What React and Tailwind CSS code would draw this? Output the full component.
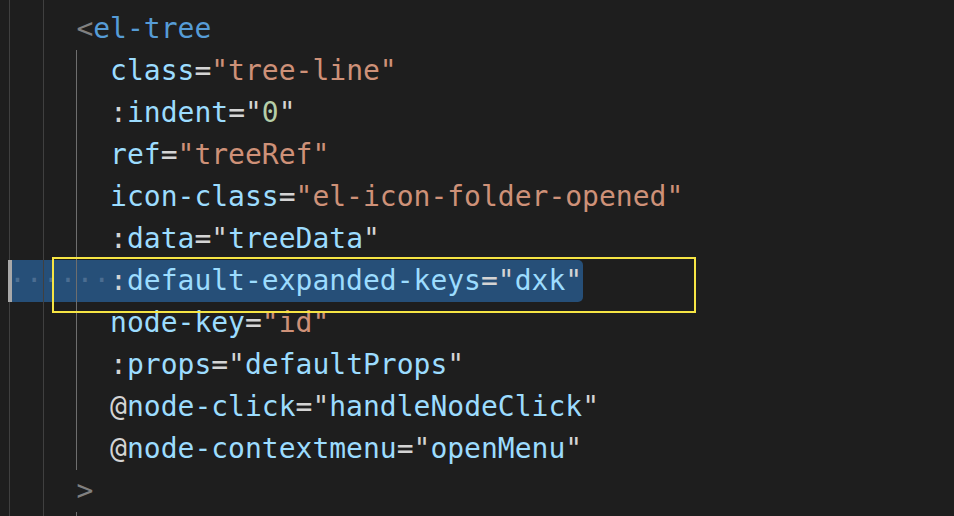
import React from 'react'

// VS Code dark+ token colours
const C = {
  tag: 'text-[#808080]',
  name: 'text-[#569cd6]',
  attr: 'text-[#9cdcfe]',
  punct: 'text-[#d4d4d4]',
  str: 'text-[#ce9178]',
  num: 'text-[#b5cea8]',
}

// each line: indent units (2 spaces each) + token list [class, text]
const LINES = [
  { units: 2, tokens: [[C.tag, '<'], [C.name, 'el-tree']] },
  { units: 3, tokens: [[C.attr, 'class'], [C.punct, '='], [C.str, '"tree-line"']] },
  { units: 3, tokens: [[C.punct, ':'], [C.attr, 'indent'], [C.punct, '="'], [C.num, '0'], [C.punct, '"']] },
  { units: 3, tokens: [[C.attr, 'ref'], [C.punct, '='], [C.str, '"treeRef"']] },
  { units: 3, tokens: [[C.attr, 'icon-class'], [C.punct, '='], [C.str, '"el-icon-folder-opened"']] },
  { units: 3, tokens: [[C.punct, ':'], [C.attr, 'data'], [C.punct, '="'], [C.attr, 'treeData'], [C.punct, '"']] },
  { units: 3, selected: true, tokens: [[C.punct, ':'], [C.attr, 'default-expanded-keys'], [C.punct, '="'], [C.attr, 'dxk'], [C.punct, '"']] },
  { units: 3, tokens: [[C.attr, 'node-key'], [C.punct, '='], [C.str, '"id"']] },
  { units: 3, tokens: [[C.punct, ':'], [C.attr, 'props'], [C.punct, '="'], [C.attr, 'defaultProps'], [C.punct, '"']] },
  { units: 3, tokens: [[C.punct, '@'], [C.attr, 'node-click'], [C.punct, '="'], [C.attr, 'handleNodeClick'], [C.punct, '"']] },
  { units: 3, tokens: [[C.punct, '@'], [C.attr, 'node-contextmenu'], [C.punct, '="'], [C.attr, 'openMenu'], [C.punct, '"']] },
  { units: 2, tokens: [[C.tag, '>']] },
]

function Guide({ level, dots }) {
  return (
    <span
      className={[
        'w-[2ch] shrink-0 border-l',
        level === 2 ? 'border-[#6e6e6e]' : 'border-[#404040]',
        dots ? 'text-[#4b6d91] tracking-normal' : '',
      ].join(' ')}
    >
      {dots ? <span className="relative -left-px">··</span> : null}
    </span>
  )
}

function Guides({ count, dots }) {
  return Array.from({ length: count }, (_, i) => <Guide key={i} level={i} dots={dots} />)
}

function CodeLine({ line }) {
  const body = (
    <>
      <Guides count={line.units} dots={line.selected} />
      {line.tokens.map(([cls, text], i) => (
        <span key={i} className={cls}>{text}</span>
      ))}
    </>
  )

  if (line.selected) {
    return (
      <div className="flex h-[42px] leading-[42px]">
        <div className="relative flex bg-[#264f78] rounded-r-[5px] pr-px">
          <span className="absolute -left-px top-0 h-full w-1 bg-[#a9a9a9]" />
          {body}
        </div>
      </div>
    )
  }

  return <div className="flex h-[42px] leading-[42px]">{body}</div>
}

export default function App() {
  return (
    <div
      className="relative w-[954px] h-[516px] overflow-hidden bg-[#1e1e1e] pl-[9px] whitespace-pre text-[28px]"
      style={{ fontFamily: '"DejaVu Sans Mono", "Liberation Mono", monospace' }}
    >
      {/* tail of the line above the viewport */}
      <div className="flex h-[8px]">
        <Guides count={2} />
      </div>

      {LINES.map((line, i) => (
        <CodeLine key={i} line={line} />
      ))}

      <div className="flex h-[42px]">
        <Guides count={3} />
      </div>

      {/* annotation box drawn over the selected line */}
      <div className="absolute left-[52px] top-[257px] w-[644px] h-[56px] border-2 border-[#f6e544]" />
    </div>
  )
}
